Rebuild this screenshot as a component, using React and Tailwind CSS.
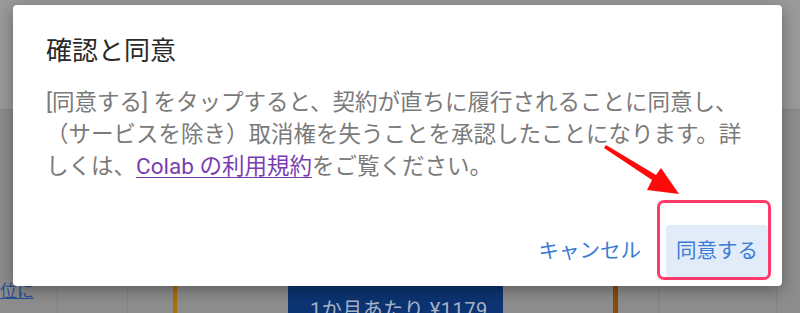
import React from 'react';

const font = { fontFamily: 'Roboto, "Noto Sans CJK JP", sans-serif' };

const Arrow = () => (
    <svg className="absolute left-[600px] top-[140px]" width="90" height="60" viewBox="0 0 90 60">
        <polygon points="6,5 56,35 61,28 79,54 47,50 52,40 4,8" fill="#ff0a0a" />
    </svg>
);

const App = () => {
    return (
        <div className="relative w-[800px] h-[313px] overflow-hidden bg-[#8d8d8d]" style={font}>
            {/* page behind the backdrop */}
            <div className="flex flex-col h-full">
                <div className="h-[110px] bg-[#9a9a9a] border-b border-[#858585]" />
                <div className="flex-1 flex flex-col justify-end">
                    <div className="flex h-[33px]">
                        <div className="w-[58px] border-r border-[#828282]">
                            <a className="text-[17px] leading-[22px] text-[#2b4f98] underline decoration-1">位に</a>
                        </div>
                        <div className="w-[70px] border-r border-[#828282]" />
                        <div className="w-[45px]" />
                        <div className="w-[4px] bg-[#a8700c]" />
                        <div className="w-[111px]" />
                        <div className="w-[215px] mt-[4px] rounded-t-[4px] bg-[#0c3472] pl-[22px] pt-[14px] text-[20px] leading-[24px] tracking-[0.5px] text-[#a9b3c6] whitespace-nowrap">
                            1か月あたり ¥1179
                        </div>
                        <div className="w-[110px]" />
                        <div className="w-[5px] bg-[#8a4c0c]" />
                        <div className="w-[40px]" />
                        <div className="w-[118px] border-l border-[#828282]" />
                        <div className="flex-1 border-l border-[#828282]" />
                    </div>
                </div>
            </div>

            {/* dialog */}
            <div className="absolute left-[13px] top-[5px] w-[769px] h-[281px] bg-white rounded-[4px] shadow-[0_4px_16px_rgba(0,0,0,0.35)] flex flex-col px-[33px] pt-[28px] pb-[9px]">
                <h2 className="text-[26px] leading-[36px] text-[#2a2a2a] font-normal">確認と同意</h2>
                <p className="mt-[17px] text-[22.5px] leading-[32px] text-[#7a7a7a]">
                    [同意する] をタップすると、契約が直ちに履行されることに同意し、（サービスを除き）取消権を失うことを承認したことになります。詳しくは、
                    <a className="text-[#7a3db0] underline decoration-1 underline-offset-[3px]">Colab の利用規約</a>
                    をご覧ください。
                </p>
                <div className="mt-auto flex justify-end items-center gap-[15px] -mr-[19px]">
                    <button className="h-[52px] px-[10px] text-[20.5px] text-[#3a7bd5] rounded-[4px]">キャンセル</button>
                    <button className="h-[52px] px-[10px] text-[20.5px] text-[#3a7bd5] bg-[#e2ebf8] rounded-[4px]">同意する</button>
                </div>
            </div>

            {/* annotation */}
            <div className="absolute left-[657px] top-[200px] w-[114px] h-[80px] border-[3px] border-[#ff3a6a] rounded-[7px]" />
            <Arrow />
        </div>
    );
};

export default App;
